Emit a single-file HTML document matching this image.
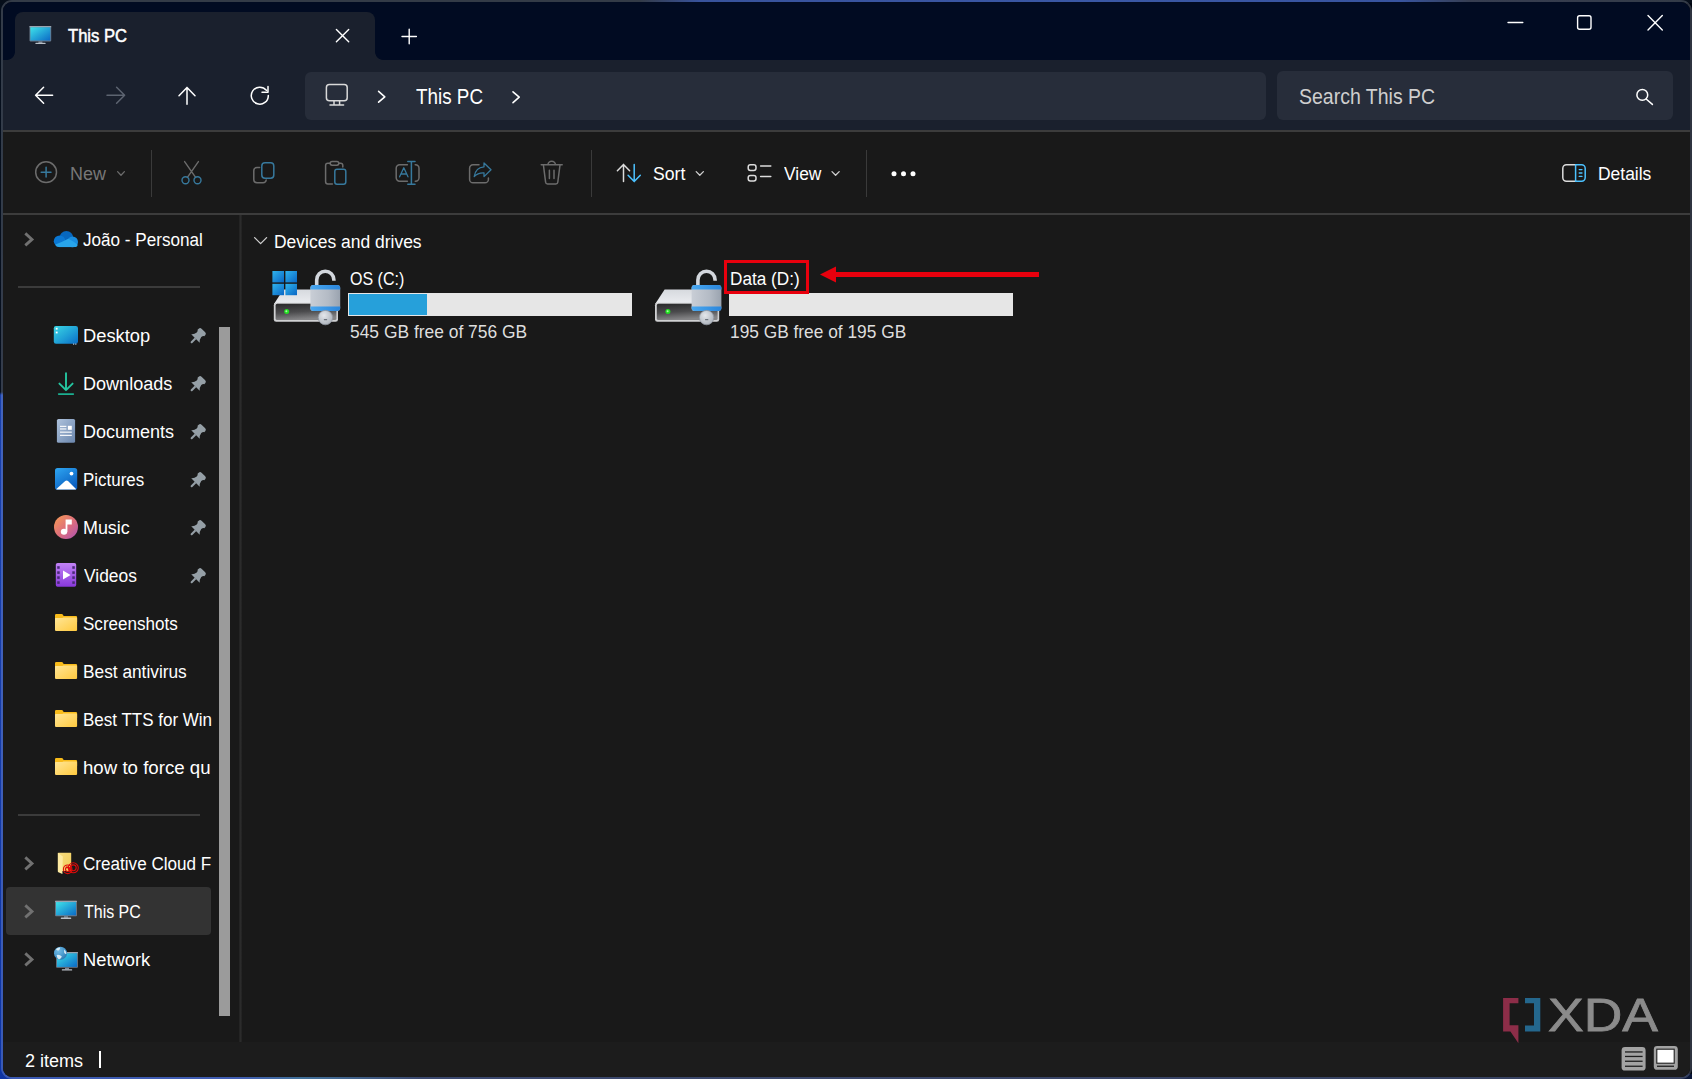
<!DOCTYPE html>
<html lang="en">
<head>
<meta charset="utf-8">
<title>This PC</title>
<style>
html,body{margin:0;padding:0;}
body{width:1692px;height:1079px;overflow:hidden;position:relative;background:#1b2130;font-family:"Liberation Sans",sans-serif;}
.abs{position:absolute;}
.t{position:absolute;white-space:pre;transform-origin:0 50%;font-family:"Liberation Sans",sans-serif;}
svg{position:absolute;left:0;top:0;overflow:visible;}
.wall{position:absolute;left:0;top:0;width:1692px;height:1079px;}
.win{position:absolute;left:3px;top:2px;width:1687px;height:1075px;border-radius:9px;overflow:hidden;background:#191919;}
.titlebar{position:absolute;left:0;top:0;width:1687px;height:58px;background:#010b22;}
.navbar{position:absolute;left:0;top:58px;width:1687px;height:70px;background:#1a202d;}
.tab{position:absolute;left:12px;top:10px;width:360px;height:48px;background:#1a202d;border-radius:8px 8px 0 0;}
.tabfl{position:absolute;left:4px;top:50px;width:8px;height:8px;background:radial-gradient(circle at 0 0,rgba(26,32,45,0) 7.5px,#1a202d 8.2px);}
.tabfr{position:absolute;left:372px;top:50px;width:8px;height:8px;background:radial-gradient(circle at 100% 0,rgba(26,32,45,0) 7.5px,#1a202d 8.2px);}
.addr{position:absolute;left:302px;top:70px;width:961px;height:48px;border-radius:6px;background:#272d3a;}
.search{position:absolute;left:1274px;top:69px;width:396px;height:49px;border-radius:6px;background:#272d3a;}
.hl{position:absolute;left:0;width:1687px;background:#3c3c3c;}
.toolbar{position:absolute;left:0;top:130px;width:1687px;height:82px;background:#191919;}
.vsep{position:absolute;top:147.5px;width:1.6px;height:47px;background:#3a3a3a;}
.divider{position:absolute;left:235.5px;top:213px;width:3px;height:827px;background:linear-gradient(90deg,#1d1d1d,#2b2b2b 35%,#2b2b2b 65%,#1d1d1d);}
.status{position:absolute;left:0;top:1040px;width:1687px;height:35px;background:#1c1c1c;}
.sel{position:absolute;left:3.2px;top:885px;width:204.6px;height:48px;border-radius:4px;background:#333;}
.sline{position:absolute;left:15px;width:182px;height:1.6px;background:#3b3b3b;}
.scroll{position:absolute;left:216px;top:325px;width:11px;height:689px;background:#9b9b9b;}
</style>
</head>
<body>
<div class="wall">
  <!-- desktop wallpaper slivers visible around the window + translucent window border -->
  <div class="abs" style="left:0;top:0;width:14px;height:1079px;background:linear-gradient(180deg,#050e1b 0,#07101f 392px,#1840ac 395px,#163ca8 700px,#0c34a4 1079px);"></div>
  <div class="abs" style="left:1678px;top:0;width:14px;height:1079px;background:#000611;"></div>
  <div class="abs" style="left:0;top:0;width:1692px;height:3px;background:linear-gradient(90deg,#060e1a 0,#060e1a 640px,#0c2c84 700px,#0e3290 1100px,#0c2e88 1400px,#0a1226 1470px,#060e1a 1692px);"></div>
  <div class="abs" style="left:0;top:1074px;width:1692px;height:5px;background:linear-gradient(90deg,#0e34a2 0,#173aa0 240px,#165080 300px,#184878 330px,#10204c 420px,#0a1638 1692px);"></div>
  <svg width="1692" height="1079" viewBox="0 0 1692 1079" fill="none">
    <rect x="2" y="1" width="1689" height="1077" rx="10" stroke="rgb(235,240,255)" stroke-opacity=".2" stroke-width="2"/>
  </svg>
</div>
<div class="win">
  <div class="titlebar"></div>
  <div class="navbar"></div>
  <div class="tab"></div><div class="tabfl"></div><div class="tabfr"></div>
  <div class="addr"></div>
  <div class="search"></div>
  <div class="hl" style="top:128px;height:2px;"></div>
  <div class="toolbar"></div>
  <div class="vsep" style="left:147.7px"></div>
  <div class="vsep" style="left:587.7px"></div>
  <div class="vsep" style="left:862.8px"></div>
  <div class="hl" style="top:211px;height:2px;"></div>
  <div class="divider"></div>
  <div class="status"></div>
  <div class="sel"></div>
  <div class="sline" style="top:284px"></div>
  <div class="sline" style="top:812px"></div>
  <div class="scroll"></div>
</div>
<svg width="1692" height="1079" viewBox="0 0 1692 1079" fill="none">
  <defs>
    <linearGradient id="gScr" x1="0" y1="0" x2="1" y2="1">
      <stop offset="0" stop-color="#3fe3ea"/><stop offset=".5" stop-color="#24a6d8"/><stop offset="1" stop-color="#0b6ac6"/>
    </linearGradient>
  </defs>
  <!-- tab icon: monitor -->
  <rect x="29.5" y="26" width="21.7" height="15.4" rx="0.8" fill="#6d7b8c"/>
  <rect x="29.5" y="26" width="21.7" height="1.3" fill="#9aa4b1"/>
  <rect x="30.4" y="27.3" width="19.9" height="13.2" fill="url(#gScr)"/>
  <rect x="38.4" y="41.4" width="4" height="1.6" fill="#7d8794"/>
  <rect x="35.4" y="42.8" width="10.2" height="1.3" rx=".5" fill="#b9c0c8"/>
  <!-- tab close / new tab -->
  <g stroke="#fff" stroke-width="1.4" stroke-linecap="round">
    <path d="M336.4 29.4 L348.7 41.7 M348.7 29.4 L336.4 41.7"/>
    <path d="M402 36.5 H416.4 M409.2 29.3 V43.7"/>
  </g>
  <!-- window controls -->
  <g stroke="#fff" stroke-width="1.4" stroke-linecap="round">
    <path d="M1508 22.5 H1522.8"/>
    <rect x="1577.6" y="15.7" width="13.4" height="13.6" rx="2"/>
    <path d="M1648 15.6 L1662.3 29.9 M1662.3 15.6 L1648 29.9"/>
  </g>
  <!-- nav arrows -->
  <g stroke="#fff" stroke-width="1.5" stroke-linecap="round" stroke-linejoin="round">
    <path d="M52.6 95.2 H35.8 M43.6 87.3 L35.6 95.2 L43.6 103.2"/>
    <path d="M187 104.3 V87.6 M179 95.7 L187 87.5 L195 95.7"/>
    <path d="M266.4 90.3 A8.5 8.5 0 1 0 268.3 95.6 M262 92.2 H268 V86.6"/>
  </g>
  <g stroke="#5d6471" stroke-width="1.5" stroke-linecap="round" stroke-linejoin="round">
    <path d="M107 95.2 H124.4 M116.6 87.3 L124.6 95.2 L116.6 103.2"/>
  </g>
  <!-- address bar monitor -->
  <g stroke="#d9d9d9" stroke-width="1.5" stroke-linecap="round">
    <rect x="326.4" y="84.6" width="20.8" height="16.2" rx="3"/>
    <path d="M334 101 V104.6 M339.6 101 V104.6 M330 105 H343.6"/>
  </g>
  <g stroke="#fff" stroke-width="1.6" stroke-linecap="round" stroke-linejoin="round">
    <path d="M378.6 91.4 L384.8 96.8 L378.6 102.2"/>
    <path d="M513 91.8 L519.2 97.2 L513 102.6"/>
  </g>
  <!-- search icon -->
  <g stroke="#fff" stroke-width="1.5" stroke-linecap="round">
    <circle cx="1642.3" cy="94.9" r="5.4"/>
    <path d="M1646.4 99.2 L1652.4 104.4"/>
  </g>
</svg>
<svg width="1692" height="1079" viewBox="0 0 1692 1079" fill="none" stroke-linecap="round" stroke-linejoin="round">
  <!-- New -->
  <circle cx="46.1" cy="172.2" r="10.4" stroke="#6c6c6c" stroke-width="1.5"/>
  <path d="M41.2 172.2 H51 M46.1 167.3 V177.1" stroke="#37799d" stroke-width="1.5"/>
  <path d="M117.6 171.6 L121 175.2 L124.4 171.6" stroke="#6c6c6c" stroke-width="1.3"/>
  <!-- Cut -->
  <g stroke-width="1.4">
    <path d="M184.6 161.6 L195.6 177.4 M198.4 161.6 L187.4 177.4" stroke="#6c6c6c"/>
    <circle cx="185.5" cy="180.3" r="3.5" stroke="#37799d"/>
    <circle cx="197.5" cy="180.3" r="3.5" stroke="#37799d"/>
  </g>
  <!-- Copy -->
  <g stroke-width="1.5">
    <path d="M259.6 167.6 H257 A3.2 3.2 0 0 0 253.8 170.8 V179.6 A3.2 3.2 0 0 0 257 182.8 H263 A3.2 3.2 0 0 0 266.2 180" stroke="#6c6c6c"/>
    <rect x="261.8" y="162.8" width="12" height="15.4" rx="3.2" stroke="#37799d"/>
  </g>
  <!-- Paste -->
  <g stroke-width="1.5">
    <path d="M332.4 184 H327.8 A2.2 2.2 0 0 1 325.6 181.8 V165.4 A2.2 2.2 0 0 1 327.8 163.2 H340.6 A2.2 2.2 0 0 1 342.8 165.4 V167" stroke="#6c6c6c"/>
    <rect x="330.2" y="161.4" width="8.6" height="3.8" rx="1.9" stroke="#6c6c6c" fill="#191919"/>
    <rect x="334.8" y="169.2" width="11" height="15" rx="2.2" stroke="#37799d"/>
  </g>
  <!-- Rename -->
  <g stroke-width="1.5">
    <path d="M407.4 164.8 H399.6 A3.4 3.4 0 0 0 396.2 168.2 V177.8 A3.4 3.4 0 0 0 399.6 181.2 H407.4 M415.2 164.8 H415.6 A3.4 3.4 0 0 1 419 168.2 V177.8 A3.4 3.4 0 0 1 415.6 181.2 H415.2" stroke="#6c6c6c"/>
    <path d="M407.8 161.6 H415 M407.8 184.2 H415 M411.4 161.6 V184.2" stroke="#37799d"/>
    <path d="M399.6 176.8 L403.8 167.8 L408 176.8 M401 174 H406.6" stroke="#37799d" stroke-width="1.3"/>
  </g>
  <!-- Share -->
  <g stroke-width="1.5">
    <path d="M479 164.8 H473 A3.4 3.4 0 0 0 469.6 168.2 V179.4 A3.4 3.4 0 0 0 473 182.8 H485 A3.4 3.4 0 0 0 488.4 179.4 V178" stroke="#6c6c6c"/>
    <path d="M484 163 L491 169.8 L484 176.6 V172.8 C479.5 172.6 476.5 174 474.2 176.6 C475 170.8 478.6 167.2 484 166.8 Z" stroke="#37799d" stroke-width="1.3"/>
  </g>
  <!-- Delete -->
  <g stroke="#6c6c6c" stroke-width="1.5">
    <path d="M541.2 164.8 H562.2 M548 164.6 A3.7 3.4 0 0 1 555.4 164.6"/>
    <path d="M543.4 165 L545.6 182.2 A2 2 0 0 0 547.6 184 H555.8 A2 2 0 0 0 557.8 182.2 L560 165"/>
    <path d="M549.4 170.2 V178.6 M554 170.2 V178.6"/>
  </g>
  <!-- Sort -->
  <g stroke-width="1.5">
    <path d="M623.5 181.6 V164.4 M617.4 170.8 L623.5 164.4 L629.6 170.8" stroke="#dcdcdc"/>
    <path d="M634.2 164.4 V181.6 M628.1 175.2 L634.2 181.6 L640.3 175.2" stroke="#4cc2ff"/>
  </g>
  <path d="M696.2 171.6 L699.8 175.2 L703.4 171.6" stroke="#cfcfcf" stroke-width="1.3"/>
  <!-- View -->
  <g stroke="#dcdcdc" stroke-width="1.5">
    <rect x="748.2" y="164.8" width="7.8" height="5.6" rx="2.2"/>
    <rect x="748.2" y="175.4" width="7.8" height="5.6" rx="2.2"/>
    <path d="M760.6 166 H770.8 M760.6 176.4 H770.8"/>
  </g>
  <path d="M832 171.6 L835.6 175.2 L839.2 171.6" stroke="#cfcfcf" stroke-width="1.3"/>
  <!-- more -->
  <g fill="#fff" stroke="none">
    <circle cx="894" cy="173.8" r="2.5"/><circle cx="903.5" cy="173.8" r="2.5"/><circle cx="913" cy="173.8" r="2.5"/>
  </g>
  <!-- Details -->
  <g stroke-width="1.5">
    <path d="M1575.6 164.8 H1566.4 A3.6 3.6 0 0 0 1562.8 168.4 V177.6 A3.6 3.6 0 0 0 1566.4 181.2 H1575.6" stroke="#dcdcdc"/>
    <path d="M1575.6 164.8 H1581.6 A3.6 3.6 0 0 1 1585.2 168.4 V177.6 A3.6 3.6 0 0 1 1581.6 181.2 H1575.6 Z" stroke="#4cc2ff"/>
    <path d="M1579.2 169.6 H1582 M1579.2 173 H1582 M1579.2 176.4 H1582" stroke="#4cc2ff" stroke-width="1.3"/>
  </g>
</svg>
<svg width="1692" height="1079" viewBox="0 0 1692 1079" fill="none">
<defs>
<linearGradient id="gDesk" x1="0" y1="0" x2="1" y2="1"><stop offset="0" stop-color="#3ad6e4"/><stop offset=".55" stop-color="#1f9fd6"/><stop offset="1" stop-color="#0a6cc6"/></linearGradient>
<linearGradient id="gDl" x1="0" y1="0" x2="0" y2="1"><stop offset="0" stop-color="#2bd0a6"/><stop offset="1" stop-color="#17a98c"/></linearGradient>
<linearGradient id="gDoc" x1="0" y1="0" x2="1" y2="1"><stop offset="0" stop-color="#aec2dc"/><stop offset="1" stop-color="#6a86ad"/></linearGradient>
<linearGradient id="gPic" x1="0" y1="0" x2="0.6" y2="1"><stop offset="0" stop-color="#2ea6f2"/><stop offset="1" stop-color="#0a5ec0"/></linearGradient>
<linearGradient id="gMus" x1="0.1" y1="0.1" x2="0.9" y2="0.9"><stop offset="0" stop-color="#f3945a"/><stop offset=".55" stop-color="#dc6d7e"/><stop offset="1" stop-color="#b757a8"/></linearGradient>
<linearGradient id="gVid" x1="0" y1="0" x2="0" y2="1"><stop offset="0" stop-color="#c283f6"/><stop offset="1" stop-color="#8838da"/></linearGradient>
<linearGradient id="gFol" x1="0" y1="0" x2="1" y2="1"><stop offset="0" stop-color="#ffe697"/><stop offset="1" stop-color="#ffc93e"/></linearGradient>
<linearGradient id="gScr2" x1="0" y1="0" x2="1" y2="1"><stop offset="0" stop-color="#3fe3ea"/><stop offset=".5" stop-color="#24a6d8"/><stop offset="1" stop-color="#0b6ac6"/></linearGradient>
<radialGradient id="gGlobe" cx=".35" cy=".3" r=".8"><stop offset="0" stop-color="#74bce6"/><stop offset=".55" stop-color="#4a9ace"/><stop offset="1" stop-color="#2a74ac"/></radialGradient>
</defs>
<path d="M25.3 233.4 L32 239.4 L25.3 245.4" stroke="#717171" stroke-width="2.8" stroke-linejoin="miter"/>
<path d="M25.3 857.4 L32 863.4 L25.3 869.4" stroke="#717171" stroke-width="2.8" stroke-linejoin="miter"/>
<path d="M25.3 905.4 L32 911.4 L25.3 917.4" stroke="#717171" stroke-width="2.8" stroke-linejoin="miter"/>
<path d="M25.3 953.4 L32 959.4 L25.3 965.4" stroke="#717171" stroke-width="2.8" stroke-linejoin="miter"/>
<g>
<circle cx="66.4" cy="237.9" r="6.9" fill="#0767be"/>
<circle cx="59.6" cy="241.2" r="5.8" fill="#0a77d3"/>
<circle cx="72.6" cy="241.9" r="5.4" fill="#198de0"/>
<rect x="59" y="243" width="14" height="4.1" fill="#0a77d3"/>
<path d="M55.4 244.6 Q61 242.4 68.3 238.7 Q73.5 241.4 77.5 244.4 Q78 247.1 74.2 247.1 H58.8 Q56 247.1 55.4 244.6 Z" fill="#28a4ea"/>
</g>
<g>
<rect x="53.8" y="326" width="24.2" height="17.8" rx="2.2" fill="url(#gDesk)"/>
<rect x="55.8" y="327.8" width="1.8" height="1.8" fill="#fff"/><rect x="55.8" y="331.6" width="1.8" height="1.8" fill="#fff"/>
<rect x="73" y="343.6" width="1.2" height="1" fill="#cfe8ff"/><rect x="75.2" y="343.6" width="1.2" height="1" fill="#cfe8ff"/>
</g>
<g stroke="url(#gDl)" stroke-width="1.9" stroke-linecap="round" stroke-linejoin="round">
<path d="M66 373.2 V390 M59.4 383.6 L66 390.2 L72.6 383.6" stroke="#24c6a0"/>
<path d="M58.8 394.1 H73.2" stroke="#1baf90"/>
</g>
<g>
<rect x="56.9" y="419" width="18.2" height="23.8" rx="1.6" fill="url(#gDoc)"/>
<rect x="60" y="425.8" width="6.4" height="1.1" fill="#fff"/><rect x="60" y="428.4" width="6.4" height="1.1" fill="#fff"/>
<rect x="67.9" y="425.8" width="3.9" height="4" fill="#fff"/>
<rect x="60" y="431.6" width="11.8" height="1.1" fill="#fff"/><rect x="60" y="434.8" width="11.8" height="1.1" fill="#fff"/>
</g>
<g>
<rect x="55" y="468" width="22.2" height="21.8" rx="2.6" fill="url(#gPic)"/>
<path d="M56.4 489 L65.2 481 Q66.6 479.8 68 481 L76 489 Q76 489.6 75 489.6 H57.4 Q56.4 489.6 56.4 489 Z" fill="#fff"/>
<circle cx="71.5" cy="473.6" r="1.9" fill="#fff"/>
</g>
<g>
<circle cx="66" cy="527" r="12" fill="url(#gMus)"/>
<ellipse cx="64" cy="531.8" rx="3.2" ry="3" fill="#fff"/>
<path d="M65.6 531.8 V519.6 H71.8 V524.4 H67.4 V531.8 Z" fill="#fff"/>
</g>
<g>
<rect x="55.8" y="563" width="20.4" height="23.8" rx="1.8" fill="url(#gVid)"/>
<rect x="57.2" y="566.2" width="2.5" height="2.6" fill="#4a2a78"/>
<rect x="72.3" y="566.2" width="2.5" height="2.6" fill="#4a2a78"/>
<rect x="57.2" y="571.3" width="2.5" height="2.6" fill="#4a2a78"/>
<rect x="72.3" y="571.3" width="2.5" height="2.6" fill="#4a2a78"/>
<rect x="57.2" y="576.3" width="2.5" height="2.6" fill="#4a2a78"/>
<rect x="72.3" y="576.3" width="2.5" height="2.6" fill="#4a2a78"/>
<rect x="57.2" y="581.3" width="2.5" height="2.6" fill="#4a2a78"/>
<rect x="72.3" y="581.3" width="2.5" height="2.6" fill="#4a2a78"/>
<path d="M63 570.6 L70.6 575 L63 579.4 Z" fill="#fff"/>
</g>
<g>
<path d="M55 615.2 Q55 614 56.2 614 H61.6 Q62.6 614 63 614.8 L63.6 615.9 H75.9 Q77.1 615.9 77.1 617.1 V622 H55 Z" fill="#f8bb1a"/>
<path d="M55 618.6 Q55 617.9 55.8 617.9 H62.4 Q63 617.9 63.4 617.5 H76.3 Q77.1 617.5 77.1 618.3 V629.9 Q77.1 631 76 631 H56.1 Q55 631 55 629.9 Z" fill="url(#gFol)"/>
</g>
<g>
<path d="M55 663.2 Q55 662 56.2 662 H61.6 Q62.6 662 63 662.8 L63.6 663.9 H75.9 Q77.1 663.9 77.1 665.1 V670 H55 Z" fill="#f8bb1a"/>
<path d="M55 666.6 Q55 665.9 55.8 665.9 H62.4 Q63 665.9 63.4 665.5 H76.3 Q77.1 665.5 77.1 666.3 V677.9 Q77.1 679 76 679 H56.1 Q55 679 55 677.9 Z" fill="url(#gFol)"/>
</g>
<g>
<path d="M55 711.2 Q55 710 56.2 710 H61.6 Q62.6 710 63 710.8 L63.6 711.9 H75.9 Q77.1 711.9 77.1 713.1 V718 H55 Z" fill="#f8bb1a"/>
<path d="M55 714.6 Q55 713.9 55.8 713.9 H62.4 Q63 713.9 63.4 713.5 H76.3 Q77.1 713.5 77.1 714.3 V725.9 Q77.1 727 76 727 H56.1 Q55 727 55 725.9 Z" fill="url(#gFol)"/>
</g>
<g>
<path d="M55 759.2 Q55 758 56.2 758 H61.6 Q62.6 758 63 758.8 L63.6 759.9 H75.9 Q77.1 759.9 77.1 761.1 V766 H55 Z" fill="#f8bb1a"/>
<path d="M55 762.6 Q55 761.9 55.8 761.9 H62.4 Q63 761.9 63.4 761.5 H76.3 Q77.1 761.5 77.1 762.3 V773.9 Q77.1 775 76 775 H56.1 Q55 775 55 773.9 Z" fill="url(#gFol)"/>
</g>
<g>
<linearGradient id="gCCb" x1="0" y1="0" x2="1" y2="1"><stop offset="0" stop-color="#f7dd80"/><stop offset="1" stop-color="#efcb58"/></linearGradient>
<rect x="57.9" y="852.8" width="13.3" height="18.2" rx=".6" fill="url(#gCCb)"/>
<path d="M57.9 852.8 L62.8 856.6 L62.4 874 L57.9 872 Z" fill="#fdeaa2"/>
<g stroke="#e00a0a" stroke-width="1.1" fill="none">
<circle cx="73.3" cy="867.8" r="5"/><circle cx="73.3" cy="867.8" r="2.9"/>
<circle cx="67.7" cy="869.3" r="4.3"/><circle cx="67.7" cy="869.3" r="2.2"/>
<path d="M66.4 866.6 L72 871.4"/>
</g>
</g>
<g>
<rect x="55.1" y="900.8" width="21.8" height="15.4" rx=".8" fill="#6d7b8c"/>
<rect x="55.1" y="900.8" width="21.8" height="1.3" fill="#9aa4b1"/>
<rect x="56.0" y="902.0999999999999" width="20.0" height="13.2" fill="url(#gScr2)"/>
<rect x="64.0" y="916.1999999999999" width="4" height="1.6" fill="#7d8794"/>
<rect x="60.8" y="917.5999999999999" width="10.4" height="1.3" rx=".5" fill="#b9c0c8"/>
</g>
<g>
<rect x="56.1" y="952" width="21.8" height="15.8" rx=".8" fill="#6d7b8c"/>
<rect x="56.1" y="952" width="21.8" height="1.3" fill="#9aa4b1"/>
<rect x="57.0" y="953.3" width="20.0" height="13.600000000000001" fill="url(#gScr2)"/>
<rect x="65.0" y="967.8" width="4" height="1.6" fill="#7d8794"/>
<rect x="61.8" y="969.1999999999999" width="10.4" height="1.3" rx=".5" fill="#b9c0c8"/>
</g>
<g>
<circle cx="60.5" cy="953.2" r="6.5" fill="url(#gGlobe)"/>
<path d="M56 949.2 Q57.6 947.4 59.8 947.6 Q60.8 949 59 950.2 Q57.4 951.4 56 949.2 Z" fill="#e4f3fb" fill-opacity=".9"/>
<path d="M64.4 949.4 Q66.4 951.4 66.4 954 Q65 954.4 64.2 952.4 Q63.8 950.6 64.4 949.4 Z" fill="#e4f3fb" fill-opacity=".9"/>
<path d="M56.6 955 Q59.4 954 61.8 956.4 Q61.4 958.6 59 959.4 Q56.8 958 56.6 955 Z" fill="#e4f3fb" fill-opacity=".9"/>
</g>
<g transform="translate(195.6 338.25) rotate(45)" fill="#959fa6">
<path d="M-4.6 -9 Q-4.6 -11 -2.6 -11 H2.6 Q4.6 -11 4.6 -9 V-7.6 Q3.2 -6.4 3.2 -4.8 Q3.6 -1.8 6 0.2 H-6 Q-3.6 -1.8 -3.2 -4.8 Q-3.2 -6.4 -4.6 -7.6 Z"/>
<path d="M-1.05 0 H1.05 V5.6 Q1.05 6.6 0 6.6 Q-1.05 6.6 -1.05 5.6 Z"/>
</g>
<g transform="translate(195.6 386.25) rotate(45)" fill="#959fa6">
<path d="M-4.6 -9 Q-4.6 -11 -2.6 -11 H2.6 Q4.6 -11 4.6 -9 V-7.6 Q3.2 -6.4 3.2 -4.8 Q3.6 -1.8 6 0.2 H-6 Q-3.6 -1.8 -3.2 -4.8 Q-3.2 -6.4 -4.6 -7.6 Z"/>
<path d="M-1.05 0 H1.05 V5.6 Q1.05 6.6 0 6.6 Q-1.05 6.6 -1.05 5.6 Z"/>
</g>
<g transform="translate(195.6 434.25) rotate(45)" fill="#959fa6">
<path d="M-4.6 -9 Q-4.6 -11 -2.6 -11 H2.6 Q4.6 -11 4.6 -9 V-7.6 Q3.2 -6.4 3.2 -4.8 Q3.6 -1.8 6 0.2 H-6 Q-3.6 -1.8 -3.2 -4.8 Q-3.2 -6.4 -4.6 -7.6 Z"/>
<path d="M-1.05 0 H1.05 V5.6 Q1.05 6.6 0 6.6 Q-1.05 6.6 -1.05 5.6 Z"/>
</g>
<g transform="translate(195.6 482.25) rotate(45)" fill="#959fa6">
<path d="M-4.6 -9 Q-4.6 -11 -2.6 -11 H2.6 Q4.6 -11 4.6 -9 V-7.6 Q3.2 -6.4 3.2 -4.8 Q3.6 -1.8 6 0.2 H-6 Q-3.6 -1.8 -3.2 -4.8 Q-3.2 -6.4 -4.6 -7.6 Z"/>
<path d="M-1.05 0 H1.05 V5.6 Q1.05 6.6 0 6.6 Q-1.05 6.6 -1.05 5.6 Z"/>
</g>
<g transform="translate(195.6 530.25) rotate(45)" fill="#959fa6">
<path d="M-4.6 -9 Q-4.6 -11 -2.6 -11 H2.6 Q4.6 -11 4.6 -9 V-7.6 Q3.2 -6.4 3.2 -4.8 Q3.6 -1.8 6 0.2 H-6 Q-3.6 -1.8 -3.2 -4.8 Q-3.2 -6.4 -4.6 -7.6 Z"/>
<path d="M-1.05 0 H1.05 V5.6 Q1.05 6.6 0 6.6 Q-1.05 6.6 -1.05 5.6 Z"/>
</g>
<g transform="translate(195.6 578.25) rotate(45)" fill="#959fa6">
<path d="M-4.6 -9 Q-4.6 -11 -2.6 -11 H2.6 Q4.6 -11 4.6 -9 V-7.6 Q3.2 -6.4 3.2 -4.8 Q3.6 -1.8 6 0.2 H-6 Q-3.6 -1.8 -3.2 -4.8 Q-3.2 -6.4 -4.6 -7.6 Z"/>
<path d="M-1.05 0 H1.05 V5.6 Q1.05 6.6 0 6.6 Q-1.05 6.6 -1.05 5.6 Z"/>
</g>
</svg>
<div class="abs" style="left:348px;top:293px;width:284px;height:23px;background:#e6e6e6;"></div>
<div class="abs" style="left:349px;top:294px;width:78px;height:21px;background:#26a0da;"></div>
<div class="abs" style="left:729px;top:293px;width:284px;height:23px;background:#e6e6e6;"></div>
<div class="abs" style="left:724px;top:260px;width:79px;height:28px;border:3px solid #e8000d;"></div>
<div class="abs" style="left:99.2px;top:1051px;width:2.2px;height:17px;background:#fff;"></div>
<svg width="1692" height="1079" viewBox="0 0 1692 1079" fill="none">
<defs>
<linearGradient id="gWin" x1="0" y1="0" x2="1" y2="1"><stop offset="0" stop-color="#2fb4ee"/><stop offset="1" stop-color="#0a66c4"/></linearGradient>
<linearGradient id="gFront" x1="0" y1="0" x2="0.25" y2="1"><stop offset="0" stop-color="#29292a"/><stop offset=".55" stop-color="#4b4b4d"/><stop offset="1" stop-color="#858587"/></linearGradient>
<linearGradient id="gTop" x1="0" y1="0" x2="0" y2="1"><stop offset="0" stop-color="#d6d9de"/><stop offset="1" stop-color="#eceef1"/></linearGradient>
<linearGradient id="gLock" x1="0" y1="0" x2="1" y2="0"><stop offset="0" stop-color="#c9ced6"/><stop offset=".6" stop-color="#b4bbc5"/><stop offset="1" stop-color="#9aa3af"/></linearGradient>
<linearGradient id="gBand" x1="0" y1="0" x2="1" y2="0"><stop offset="0" stop-color="#4aa8f0"/><stop offset="1" stop-color="#2b86dc"/></linearGradient>
<radialGradient id="gKey" cx=".4" cy=".35" r=".7"><stop offset="0" stop-color="#e4e7eb"/><stop offset="1" stop-color="#aab1ba"/></radialGradient>
</defs>
<path d="M254.6 237.6 L260.6 243.6 L266.6 237.6" stroke="#cfcfcf" stroke-width="1.3" stroke-linecap="round" stroke-linejoin="round"/>
<g transform="translate(0 0)">
<path d="M283.4 289.6 H329 L338 304.2 H273.8 Z" fill="url(#gTop)"/>
<rect x="273.8" y="302.8" width="64.2" height="19" rx="2.4" fill="#cfd0d2"/>
<rect x="275.6" y="303.8" width="60.8" height="16.2" rx="1.6" fill="url(#gFront)"/>
<circle cx="286.7" cy="311.6" r="2.5" fill="#22e022"/><circle cx="286.4" cy="311.2" r="1" fill="#a8ffa0"/>
<rect x="272.4" y="271" width="11.6" height="11.4" fill="url(#gWin)"/><rect x="285.4" y="271" width="11.6" height="11.4" fill="url(#gWin)"/>
<rect x="272.4" y="283.8" width="11.6" height="11.4" fill="url(#gWin)"/><rect x="285.4" y="283.8" width="11.6" height="11.4" fill="url(#gWin)"/>
<path d="M316.7 286 V280 A8.6 8.7 0 0 1 333.9 280 V280.8" stroke="#d3d7dd" stroke-width="3.6" stroke-linecap="butt"/>
<rect x="310.4" y="285" width="29.8" height="26" rx="3" fill="url(#gLock)"/>
<path d="M310.4 288 Q310.4 285 313.4 285 H337.2 Q340.2 285 340.2 288 V289.4 H310.4 Z" fill="url(#gBand)"/>
<path d="M310.4 306.6 H340.2 V308 Q340.2 311 337.2 311 H313.4 Q310.4 311 310.4 308 Z" fill="url(#gBand)"/>
<circle cx="325.4" cy="317.6" r="7.2" fill="url(#gKey)" stroke="#8f96a0" stroke-width=".8"/>
<rect x="323.8" y="319" width="3.4" height="1.3" rx=".6" fill="#6d747e"/>
</g>
<g transform="translate(381.2 0)">
<path d="M283.4 289.6 H329 L338 304.2 H273.8 Z" fill="url(#gTop)"/>
<rect x="273.8" y="302.8" width="64.2" height="19" rx="2.4" fill="#cfd0d2"/>
<rect x="275.6" y="303.8" width="60.8" height="16.2" rx="1.6" fill="url(#gFront)"/>
<circle cx="286.7" cy="311.6" r="2.5" fill="#22e022"/><circle cx="286.4" cy="311.2" r="1" fill="#a8ffa0"/>
<path d="M316.7 286 V280 A8.6 8.7 0 0 1 333.9 280 V280.8" stroke="#d3d7dd" stroke-width="3.6" stroke-linecap="butt"/>
<rect x="310.4" y="285" width="29.8" height="26" rx="3" fill="url(#gLock)"/>
<path d="M310.4 288 Q310.4 285 313.4 285 H337.2 Q340.2 285 340.2 288 V289.4 H310.4 Z" fill="url(#gBand)"/>
<path d="M310.4 306.6 H340.2 V308 Q340.2 311 337.2 311 H313.4 Q310.4 311 310.4 308 Z" fill="url(#gBand)"/>
<circle cx="325.4" cy="317.6" r="7.2" fill="url(#gKey)" stroke="#8f96a0" stroke-width=".8"/>
<rect x="323.8" y="319" width="3.4" height="1.3" rx=".6" fill="#6d747e"/>
</g>
<path d="M820 274.5 L836 266.4 V272 H1039 V277 H836 V282.6 Z" fill="#e8000d"/>
<path d="M1503.1 998.1 H1518.4 V1003.3 H1509.6 V1025.2 H1518.4 V1043.2 L1510.4 1031.5 H1503.1 Z" fill="#8c2d48"/>
<path d="M1525 998.1 H1540.3 V1031.5 H1525 V1025.6 H1534 V1003.3 H1525 Z" fill="#24678d"/>
<rect x="1621.6" y="1047" width="24" height="23.6" rx="3.4" fill="#a3a3a3"/>
<rect x="1625" y="1051.3000000000002" width="17.6" height="1.3" fill="#1e1e1e"/>
<rect x="1625" y="1055.8000000000002" width="17.6" height="1.3" fill="#1e1e1e"/>
<rect x="1625" y="1060.6000000000001" width="17.6" height="1.3" fill="#1e1e1e"/>
<rect x="1625" y="1065.6000000000001" width="17.6" height="1.3" fill="#1e1e1e"/>
<rect x="1653.8" y="1046" width="24" height="23.8" rx="3.4" fill="#a3a3a3"/>
<rect x="1656.8" y="1049.2" width="17.4" height="14" fill="#fff" stroke="#1e1e1e" stroke-width="1.1"/>
<rect x="1657" y="1065.6" width="17" height="1.3" fill="#1e1e1e"/>
</svg>

<!-- text -->
<span class="t" style="left:68.00px;top:24.40px;font-size:17.6px;line-height:24px;color:#fff;font-weight:400;transform:scaleX(0.9428);-webkit-text-stroke:0.5px #fff;">This PC</span>
<span class="t" style="left:416.00px;top:82.72px;font-size:21.3px;line-height:28px;color:#fff;font-weight:400;transform:scaleX(0.8845);">This PC</span>
<span class="t" style="left:1299.20px;top:82.72px;font-size:21.3px;line-height:28px;color:#cfcfcf;font-weight:400;transform:scaleX(0.9151);">Search This PC</span>
<span class="t" style="left:70.20px;top:162.20px;font-size:17.6px;line-height:24px;color:#777;font-weight:400;transform:scaleX(1.0208);">New</span>
<span class="t" style="left:652.70px;top:162.20px;font-size:17.6px;line-height:24px;color:#fff;font-weight:400;transform:scaleX(1.0014);">Sort</span>
<span class="t" style="left:783.75px;top:162.20px;font-size:17.6px;line-height:24px;color:#fff;font-weight:400;transform:scaleX(0.9880);">View</span>
<span class="t" style="left:1597.70px;top:162.20px;font-size:17.6px;line-height:24px;color:#fff;font-weight:400;transform:scaleX(0.9917);">Details</span>
<span class="t" style="left:83.46px;top:228.20px;font-size:17.6px;line-height:24px;color:#fff;font-weight:400;transform:scaleX(0.9728);">João - Personal</span>
<span class="t" style="left:82.78px;top:324.20px;font-size:17.6px;line-height:24px;color:#fff;font-weight:400;transform:scaleX(1.0412);">Desktop</span>
<span class="t" style="left:82.78px;top:372.20px;font-size:17.6px;line-height:24px;color:#fff;font-weight:400;transform:scaleX(1.0261);">Downloads</span>
<span class="t" style="left:82.78px;top:420.20px;font-size:17.6px;line-height:24px;color:#fff;font-weight:400;transform:scaleX(1.0241);">Documents</span>
<span class="t" style="left:82.78px;top:468.20px;font-size:17.6px;line-height:24px;color:#fff;font-weight:400;transform:scaleX(0.9624);">Pictures</span>
<span class="t" style="left:82.78px;top:516.20px;font-size:17.6px;line-height:24px;color:#fff;font-weight:400;transform:scaleX(1.0168);">Music</span>
<span class="t" style="left:83.58px;top:564.20px;font-size:17.6px;line-height:24px;color:#fff;font-weight:400;transform:scaleX(0.9903);">Videos</span>
<span class="t" style="left:82.78px;top:612.20px;font-size:17.6px;line-height:24px;color:#fff;font-weight:400;transform:scaleX(0.9684);">Screenshots</span>
<span class="t" style="left:82.78px;top:660.20px;font-size:17.6px;line-height:24px;color:#fff;font-weight:400;transform:scaleX(0.9823);">Best antivirus</span>
<span class="t" style="left:82.78px;top:708.20px;font-size:17.6px;line-height:24px;color:#fff;font-weight:400;transform:scaleX(0.9660);">Best TTS for Win</span>
<span class="t" style="left:82.78px;top:756.20px;font-size:17.6px;line-height:24px;color:#fff;font-weight:400;transform:scaleX(1.0603);">how to force qu</span>
<span class="t" style="left:82.78px;top:852.20px;font-size:17.6px;line-height:24px;color:#fff;font-weight:400;transform:scaleX(0.9713);">Creative Cloud F</span>
<span class="t" style="left:83.58px;top:900.20px;font-size:17.6px;line-height:24px;color:#fff;font-weight:400;transform:scaleX(0.9079);">This PC</span>
<span class="t" style="left:82.78px;top:948.20px;font-size:17.6px;line-height:24px;color:#fff;font-weight:400;transform:scaleX(1.0420);">Network</span>
<span class="t" style="left:274.32px;top:230.20px;font-size:17.6px;line-height:24px;color:#fff;font-weight:400;transform:scaleX(0.9931);">Devices and drives</span>
<span class="t" style="left:350.46px;top:267.20px;font-size:17.6px;line-height:24px;color:#fff;font-weight:400;transform:scaleX(0.9102);">OS (C:)</span>
<span class="t" style="left:349.70px;top:320.20px;font-size:17.6px;line-height:24px;color:#dedede;font-weight:400;transform:scaleX(0.9896);">545 GB free of 756 GB</span>
<span class="t" style="left:730.32px;top:267.20px;font-size:17.6px;line-height:24px;color:#fff;font-weight:400;transform:scaleX(0.9765);">Data (D:)</span>
<span class="t" style="left:730.32px;top:320.20px;font-size:17.6px;line-height:24px;color:#dedede;font-weight:400;transform:scaleX(0.9844);">195 GB free of 195 GB</span>
<span class="t" style="left:25.28px;top:1049.20px;font-size:17.6px;line-height:24px;color:#fff;font-weight:400;transform:scaleX(1.0244);">2 items</span>
<span class="t" style="left:1548.00px;top:984.78px;font-size:46.8px;line-height:61px;color:#8b8b8b;font-weight:400;transform:scaleX(1.1430);-webkit-text-stroke:0.8px #8b8b8b;">XDA</span></body>
</html>
